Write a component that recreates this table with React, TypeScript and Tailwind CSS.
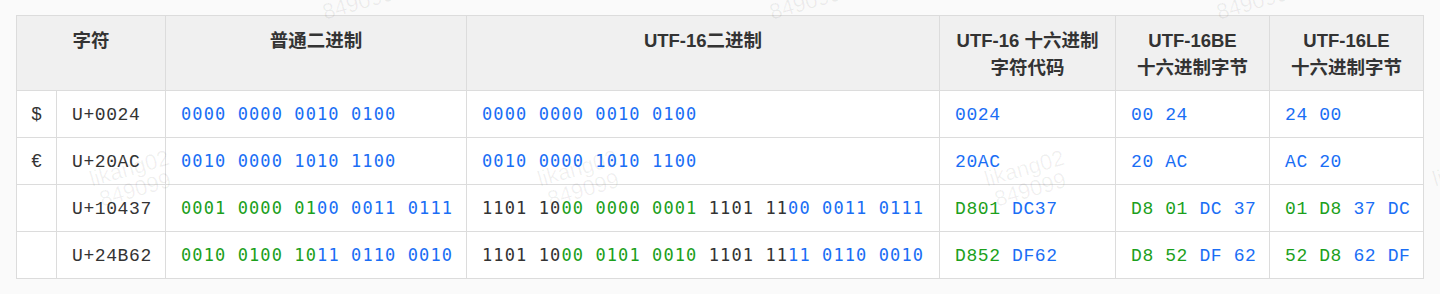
import React from 'react'

type Seg = [string, 'k' | 'g' | 'b']

const colorOf = {
    k: 'text-[#333]',
    g: 'text-[#1ca01c]',
    b: 'text-[#1a6ef5]',
}

function Bits({ segs, hex }: { segs: Seg[]; hex?: boolean }) {
    return (
        <span
            className={
                hex
                    ? "font-['Liberation_Mono',monospace] text-[18px] tracking-[0.6px] whitespace-pre"
                    : "font-['DejaVu_Sans_Mono',monospace] text-[17px] tracking-[1.1px] whitespace-pre"
            }
        >
            {segs.map(([t, c], i) => (
                <span key={i} className={colorOf[c]}>{t}</span>
            ))}
        </span>
    )
}

type Row = {
    ch: string
    code: string
    plain: Seg[]
    utf16: Seg[]
    hex: Seg[]
    be: Seg[]
    le: Seg[]
}

const rows: Row[] = [
    {
        ch: '$',
        code: 'U+0024',
        plain: [['0000 0000 0010 0100', 'b']],
        utf16: [['0000 0000 0010 0100', 'b']],
        hex: [['0024', 'b']],
        be: [['00 24', 'b']],
        le: [['24 00', 'b']],
    },
    {
        ch: '€',
        code: 'U+20AC',
        plain: [['0010 0000 1010 1100', 'b']],
        utf16: [['0010 0000 1010 1100', 'b']],
        hex: [['20AC', 'b']],
        be: [['20 AC', 'b']],
        le: [['AC 20', 'b']],
    },
    {
        ch: '',
        code: 'U+10437',
        plain: [['0001 0000 01', 'g'], ['00 0011 0111', 'b']],
        utf16: [['1101 10', 'k'], ['00 0000 0001', 'g'], [' 1101 11', 'k'], ['00 0011 0111', 'b']],
        hex: [['D801', 'g'], [' DC37', 'b']],
        be: [['D8 01', 'g'], [' DC 37', 'b']],
        le: [['01 D8', 'g'], [' 37 DC', 'b']],
    },
    {
        ch: '',
        code: 'U+24B62',
        plain: [['0010 0100 10', 'g'], ['11 0110 0010', 'b']],
        utf16: [['1101 10', 'k'], ['00 0101 0010', 'g'], [' 1101 11', 'k'], ['11 0110 0010', 'b']],
        hex: [['D852', 'g'], [' DF62', 'b']],
        be: [['D8 52', 'g'], [' DF 62', 'b']],
        le: [['52 D8', 'g'], [' 62 DF', 'b']],
    },
]

const th = 'border border-[#dcdcdc] bg-[#f0f0f0] align-top pt-[11px] pb-[9px] px-2 text-center font-bold'
const td = 'border border-[#dcdcdc] bg-white h-[47px] px-[15px] align-middle'

export default function App() {
    return (
        <div className="relative overflow-hidden min-h-[294px] bg-[#fafafa] pt-[15px] pl-4 font-['Liberation_Sans','Noto_Sans_CJK_SC',sans-serif] text-[#333]">
            <table className="table-fixed border-collapse w-[1407px] text-[18.5px] leading-[27px]">
                <colgroup>
                    <col className="w-[40px]" />
                    <col className="w-[109px]" />
                    <col className="w-[301px]" />
                    <col className="w-[473px]" />
                    <col className="w-[176px]" />
                    <col className="w-[154px]" />
                    <col className="w-[154px]" />
                </colgroup>
                <thead>
                    <tr>
                        <th colSpan={2} className={th}>字符</th>
                        <th className={th}>普通二进制</th>
                        <th className={th}>UTF-16二进制</th>
                        <th className={th}>UTF-16 十六进制<br />字符代码</th>
                        <th className={th}>UTF-16BE<br />十六进制字节</th>
                        <th className={th}>UTF-16LE<br />十六进制字节</th>
                    </tr>
                </thead>
                <tbody>
                    {rows.map(r => (
                        <tr key={r.code}>
                            <td className="border border-[#dcdcdc] bg-white h-[47px] text-center align-middle text-[18px]">{r.ch}</td>
                            <td className={td}>
                                <span className="font-['Liberation_Mono',monospace] text-[18px] tracking-[0.6px]">{r.code}</span>
                            </td>
                            <td className={td}><Bits segs={r.plain} /></td>
                            <td className={td}><Bits segs={r.utf16} /></td>
                            <td className={td}><Bits segs={r.hex} hex /></td>
                            <td className={td}><Bits segs={r.be} hex /></td>
                            <td className={td}><Bits segs={r.le} hex /></td>
                        </tr>
                    ))}
                </tbody>
            </table>

            {/* watermark */}
            <div className="pointer-events-none absolute inset-0 z-10 text-[22px] leading-[22px] text-black/[0.06] font-['Liberation_Sans',sans-serif]">
                <span className="absolute left-[323px] top-[2px] origin-left -rotate-[16deg]">849099</span>
                <span className="absolute left-[770px] top-[2px] origin-left -rotate-[16deg]">849099</span>
                <span className="absolute left-[1217px] top-[2px] origin-left -rotate-[16deg]">849099</span>

                <span className="absolute left-[90px] top-[169px] origin-left -rotate-[16deg]">likang02</span>
                <span className="absolute left-[100px] top-[189px] origin-left -rotate-[16deg]">849099</span>
                <span className="absolute left-[538px] top-[169px] origin-left -rotate-[16deg]">likang02</span>
                <span className="absolute left-[548px] top-[189px] origin-left -rotate-[16deg]">849099</span>
                <span className="absolute left-[985px] top-[169px] origin-left -rotate-[16deg]">likang02</span>
                <span className="absolute left-[995px] top-[189px] origin-left -rotate-[16deg]">849099</span>
                <span className="absolute left-[1433px] top-[169px] origin-left -rotate-[16deg]">likang02</span>
            </div>
        </div>
    )
}
